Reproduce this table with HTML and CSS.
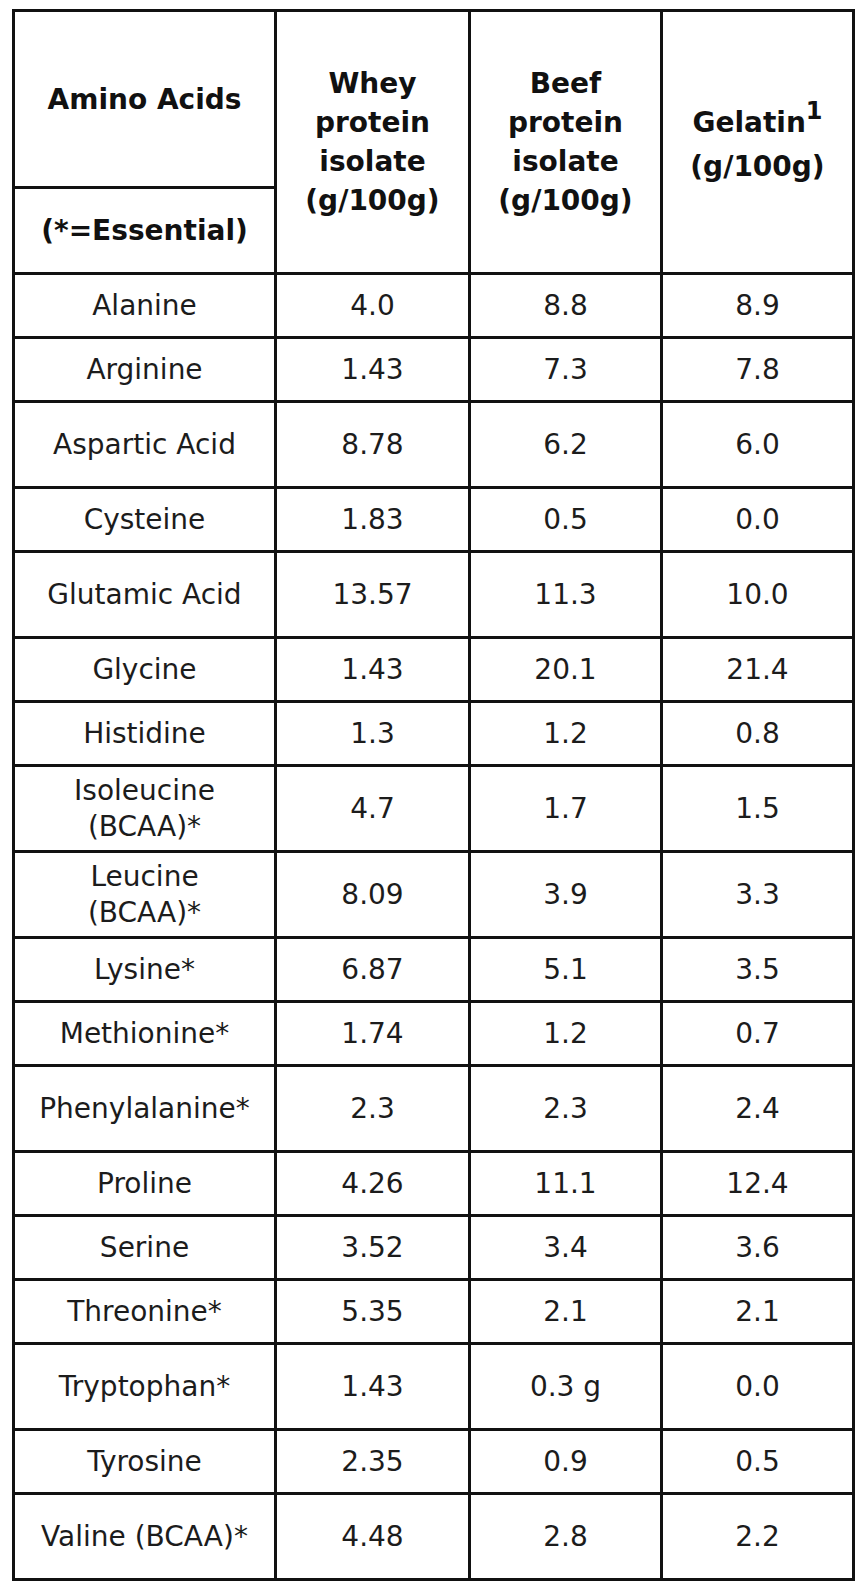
FILE: index.html
```html
<!DOCTYPE html>
<html lang="en">
<head>
<meta charset="utf-8">
<title>Amino Acids</title>
<link rel="stylesheet" href="styles.css">
</head>
<body>
<table class="aa">
  <colgroup>
    <col class="c-name">
    <col class="c-val">
    <col class="c-val2">
    <col class="c-val3">
  </colgroup>
  <thead>
    <tr class="h-top">
      <th>Amino Acids</th>
      <th rowspan="2">Whey<br>protein<br>isolate<br>(g/100g)</th>
      <th rowspan="2">Beef<br>protein<br>isolate<br>(g/100g)</th>
      <th rowspan="2" class="gel">Gelatin<sup>1</sup><br>(g/100g)</th>
    </tr>
    <tr class="h-sub">
      <th>(*=Essential)</th>
    </tr>
  </thead>
  <tbody>
    <tr class="s"><td>Alanine</td><td>4.0</td><td>8.8</td><td>8.9</td></tr>
    <tr class="s"><td>Arginine</td><td>1.43</td><td>7.3</td><td>7.8</td></tr>
    <tr class="t"><td>Aspartic Acid</td><td>8.78</td><td>6.2</td><td>6.0</td></tr>
    <tr class="s"><td>Cysteine</td><td>1.83</td><td>0.5</td><td>0.0</td></tr>
    <tr class="t"><td>Glutamic Acid</td><td>13.57</td><td>11.3</td><td>10.0</td></tr>
    <tr class="s"><td>Glycine</td><td>1.43</td><td>20.1</td><td>21.4</td></tr>
    <tr class="s"><td>Histidine</td><td>1.3</td><td>1.2</td><td>0.8</td></tr>
    <tr class="t"><td>Isoleucine<br>(BCAA)*</td><td>4.7</td><td>1.7</td><td>1.5</td></tr>
    <tr class="t"><td>Leucine<br>(BCAA)*</td><td>8.09</td><td>3.9</td><td>3.3</td></tr>
    <tr class="s"><td>Lysine*</td><td>6.87</td><td>5.1</td><td>3.5</td></tr>
    <tr class="s"><td>Methionine*</td><td>1.74</td><td>1.2</td><td>0.7</td></tr>
    <tr class="t"><td>Phenylalanine*</td><td>2.3</td><td>2.3</td><td>2.4</td></tr>
    <tr class="s"><td>Proline</td><td>4.26</td><td>11.1</td><td>12.4</td></tr>
    <tr class="s"><td>Serine</td><td>3.52</td><td>3.4</td><td>3.6</td></tr>
    <tr class="s"><td>Threonine*</td><td>5.35</td><td>2.1</td><td>2.1</td></tr>
    <tr class="t"><td>Tryptophan*</td><td>1.43</td><td>0.3 g</td><td>0.0</td></tr>
    <tr class="s"><td>Tyrosine</td><td>2.35</td><td>0.9</td><td>0.5</td></tr>
    <tr class="t"><td>Valine (BCAA)*</td><td>4.48</td><td>2.8</td><td>2.2</td></tr>
  </tbody>
</table>
</body>
</html>
```

FILE: styles.css
```css
html, body {
  margin: 0;
  padding: 0;
  background: #ffffff;
}

body {
  font-family: "DejaVu Sans", Verdana, sans-serif;
  color: #1c1c1c;
}

.aa {
  border-collapse: collapse;
  table-layout: fixed;
  width: 843px;
  margin: 9px 0 0 12px;
  border: 3px solid #111;
}

.c-name { width: 262px; }
.c-val { width: 194px; }
.c-val2 { width: 192px; }
.c-val3 { width: 192px; }

.aa th,
.aa td {
  border: 3px solid #111;
  padding: 0 4px;
  text-align: center;
  vertical-align: middle;
  font-size: 28px;
}

.aa th {
  font-weight: bold;
  color: #111;
  line-height: 39px;
}

.aa th.gel {
  line-height: 44px;
  padding-top: 6px;
}

.aa td {
  font-weight: normal;
  line-height: 36px;
}

.h-top { height: 177px; }
.h-sub { height: 86px; }

.aa tr.s { height: 64px; }
.aa tr.t { height: 86px; }

.aa sup {
  font-size: 24px;
  line-height: 0;
  vertical-align: 13px;
}
```
